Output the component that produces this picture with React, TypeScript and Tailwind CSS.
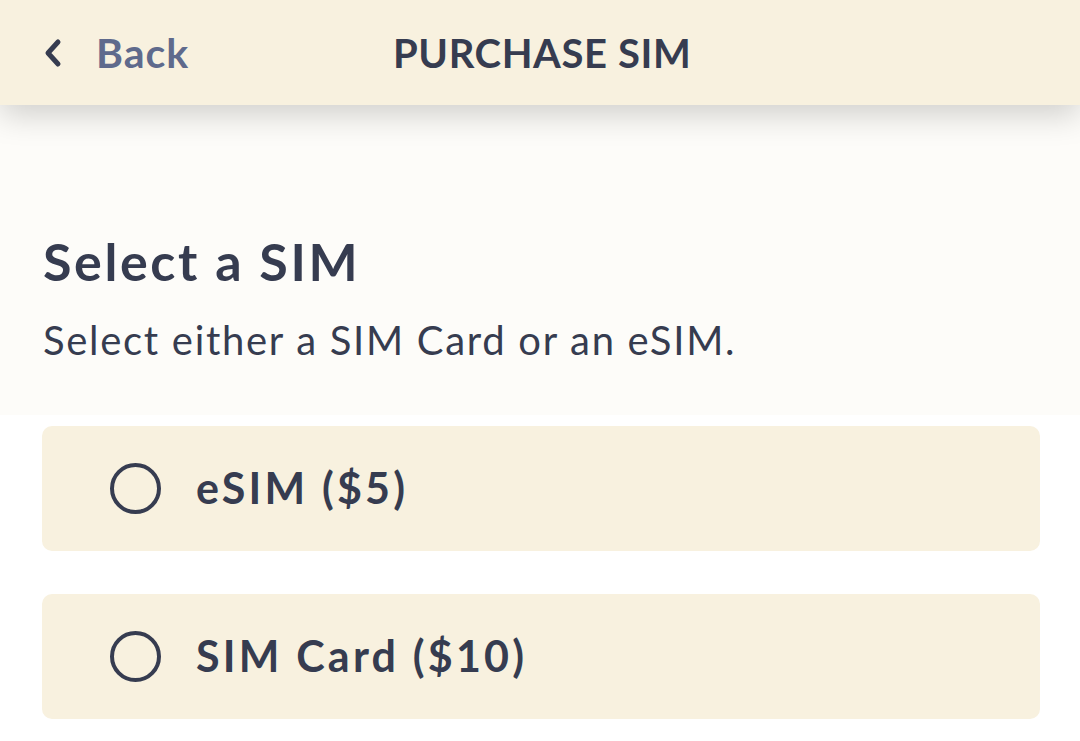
import React from "react";

function Option({ label }: { label: string }) {
  return (
    <div className="flex h-[125px] items-center rounded-[10px] bg-[#f8f1df] pl-[68px]">
      <div className="h-[51px] w-[51px] rounded-full border-[4px] border-[#363c50]" />
      <span className="ml-[35px] text-[43px] font-bold tracking-[3.2px] text-[#363c50]">{label}</span>
    </div>
  );
}

export default function App() {
  return (
    <div className="relative h-[741px] w-[1080px] overflow-hidden bg-white" style={{ fontFamily: "Lato, 'Noto Sans', sans-serif" }}>
      <div className="relative z-10 flex h-[105px] items-center bg-[#f8f1df] shadow-[0_10px_30px_rgba(0,0,0,0.18)]">
        <div className="flex items-center pl-[42px]">
          <svg width="22" height="32" viewBox="0 0 22 32" fill="none">
            <path d="M16 5 L6 16 L16 27" stroke="#363c50" strokeWidth="5" strokeLinecap="round" strokeLinejoin="round" />
          </svg>
          <span className="ml-[32px] text-[41px] font-bold tracking-[1px] text-[#5f6a8c]">Back</span>
        </div>
        <div className="absolute left-[393px] top-0 flex h-[105px] items-center text-[40px] font-bold tracking-[0.6px] text-[#363c50]">
          PURCHASE SIM
        </div>
      </div>
      <div className="bg-[#fdfcf9] px-[43px] pb-[50px] pt-[126px]">
        <h1 className="text-[52px] font-bold leading-[60px] tracking-[2.6px] text-[#363c50]">Select a SIM</h1>
        <p className="mt-[24px] text-[40px] leading-[50px] tracking-[1.7px] text-[#363c50]">Select either a SIM Card or an eSIM.</p>
      </div>
      <div className="flex flex-col gap-[43px] pl-[42px] pr-[40px] pt-[11px]">
        <Option label="eSIM ($5)" />
        <Option label="SIM Card ($10)" />
      </div>
    </div>
  );
}
